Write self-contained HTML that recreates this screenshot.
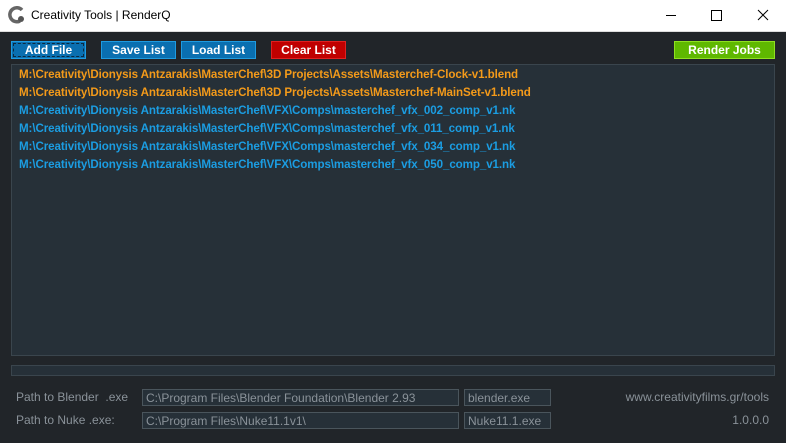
<!DOCTYPE html><html><head><style>
body{margin:0;width:786px;height:443px;background:#212529;font-family:"Liberation Sans",sans-serif;position:relative;overflow:hidden}
.tb{position:absolute;left:0;top:0;width:786px;height:31px;background:#fff;border-bottom:1px solid #ddd}
.tb .t{position:absolute;left:31px;top:8px;font-size:12px;color:#000}
.b{position:absolute;top:41px;height:16px;border:1px solid #1e9be0;background:#0a6fb0;color:#fff;font-weight:bold;font-size:12px;text-align:center;line-height:16px}
.list{position:absolute;left:11px;top:64px;width:762px;height:290px;background:#263038;border:1px solid #3a454d}
.l{position:absolute;left:7px;font-weight:bold;font-size:11.6px;white-space:nowrap;letter-spacing:-0.1px}
.o{color:#f39a1a}.c{color:#1b9de2}
.lab{position:absolute;font-size:12px;color:#8a9299}
.f{position:absolute;height:17px;background:#263038;border:1px solid #4a555c;color:#8a9299;font-size:12px;line-height:17px;padding-left:3px;box-sizing:border-box}
</style></head><body>
<div class="tb">
<svg style="position:absolute;left:8px;top:6px" width="18" height="18" viewBox="0 0 18 18"><path d="M14 4A7 7 0 1 0 12 15" stroke="#666" stroke-width="3.5" fill="none"/><circle cx="13" cy="13" r="3" fill="#555"/></svg>
<div class="t">Creativity Tools | RenderQ</div>
<div style="position:absolute;left:666px;top:15px;width:10px;height:1px;background:#000"></div>
<div style="position:absolute;left:711px;top:10px;width:9px;height:9px;border:1px solid #000"></div>
<svg style="position:absolute;left:757px;top:9px" width="12" height="12"><path d="M1 1L11 11M11 1L1 11" stroke="#000" stroke-width="1"/></svg>
</div>
<div class="b" style="left:11px;width:73px;outline:1px dashed #0a2a40;outline-offset:-3px">Add File</div>
<div class="b" style="left:101px;width:73px">Save List</div>
<div class="b" style="left:181px;width:73px">Load List</div>
<div class="b" style="left:271px;width:73px;background:#c00000;border-color:#e02020">Clear List</div>
<div class="b" style="left:674px;width:99px;background:#5fb800;border-color:#8fe020">Render Jobs</div>
<div class="list">
<div class="l o" style="top:3px">M:\Creativity\Dionysis Antzarakis\MasterChef\3D Projects\Assets\Masterchef-Clock-v1.blend</div>
<div class="l o" style="top:21px">M:\Creativity\Dionysis Antzarakis\MasterChef\3D Projects\Assets\Masterchef-MainSet-v1.blend</div>
<div class="l c" style="top:39px">M:\Creativity\Dionysis Antzarakis\MasterChef\VFX\Comps\masterchef_vfx_002_comp_v1.nk</div>
<div class="l c" style="top:57px">M:\Creativity\Dionysis Antzarakis\MasterChef\VFX\Comps\masterchef_vfx_011_comp_v1.nk</div>
<div class="l c" style="top:75px">M:\Creativity\Dionysis Antzarakis\MasterChef\VFX\Comps\masterchef_vfx_034_comp_v1.nk</div>
<div class="l c" style="top:93px">M:\Creativity\Dionysis Antzarakis\MasterChef\VFX\Comps\masterchef_vfx_050_comp_v1.nk</div>
</div>
<div style="position:absolute;left:11px;top:365px;width:762px;height:9px;background:#263038;border:1px solid #3a454d"></div>
<div class="lab" style="left:16px;top:390px">Path to Blender&nbsp; .exe</div>
<div class="lab" style="left:16px;top:413px">Path to Nuke .exe:</div>
<div class="f" style="left:142px;top:389px;width:317px">C:\Program Files\Blender Foundation\Blender 2.93</div>
<div class="f" style="left:142px;top:412px;width:317px">C:\Program Files\Nuke11.1v1\</div>
<div class="f" style="left:464px;top:389px;width:87px">blender.exe</div>
<div class="f" style="left:464px;top:412px;width:87px">Nuke11.1.exe</div>
<div class="lab" style="right:17px;top:390px">www.creativityfilms.gr/tools</div>
<div class="lab" style="right:17px;top:413px">1.0.0.0</div>
</body></html>
